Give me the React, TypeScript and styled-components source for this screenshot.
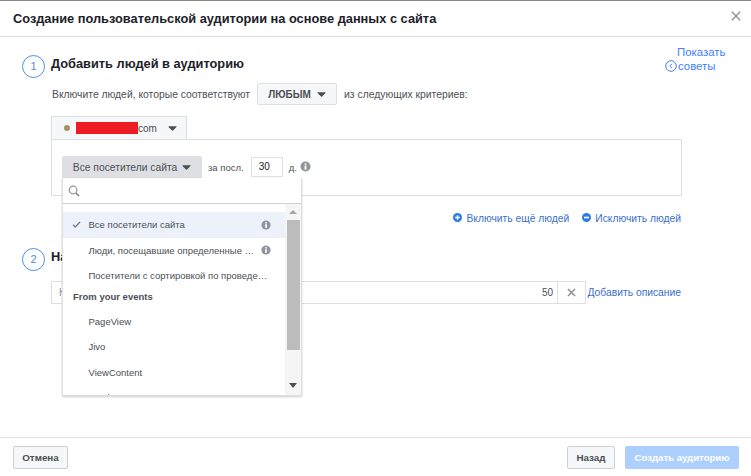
import styled, { createGlobalStyle } from 'styled-components';

const GlobalStyle = createGlobalStyle`
  html, body {
    margin: 0;
    padding: 0;
    background: #fff;
    font-family: 'Liberation Sans', Arial, sans-serif;
  }
`;

const Caret = ({ color = '#4b4f56' }: { color?: string }) => (
  <CaretIcon viewBox="0 0 10 6" fill={color}>
    <path d="M0.6 0.4h8.8a.5.5 0 0 1 .4.8L5.6 5.4a.8.8 0 0 1-1.2 0L.2 1.2a.5.5 0 0 1 .4-.8z" />
  </CaretIcon>
);

const InfoIcon = () => (
  <InfoSvg viewBox="0 0 12 12">
    <circle cx="6" cy="6" r="5.5" fill="#90949c" />
    <rect x="5" y="5" width="2" height="4.4" fill="#fff" />
    <rect x="5" y="2.6" width="2" height="1.6" fill="#fff" />
  </InfoSvg>
);

const rows = [
  { label: 'Все посетители сайта', selected: true, info: true },
  { label: 'Люди, посещавшие определенные …', info: true },
  { label: 'Посетители с сортировкой по проведе…' },
];

const events = ['PageView', 'Jivo', 'ViewContent', 'Lead'];

export default function App() {
  return (
    <Modal>
      <GlobalStyle />
      <Header>
        <Title>Создание пользовательской аудитории на основе данных с сайта</Title>
        <CloseIcon viewBox="0 0 12 12">
          <path d="M1 1l10 10M11 1L1 11" stroke="#90949c" strokeWidth="1.8" fill="none" />
        </CloseIcon>
      </Header>

      <Body>
        <StepHead>
          <StepCircle>1</StepCircle>
          <StepTitle>Добавить людей в аудиторию</StepTitle>
          <Tips>
            <TipsLine>Показать</TipsLine>
            <TipsIconLine>
              <svg width="12" height="12" viewBox="0 0 12 12" fill="none">
                <circle cx="6" cy="6" r="5.3" stroke="#4080ff" />
                <path d="M7 3.8L4.8 6 7 8.2" stroke="#4080ff" />
              </svg>
              советы
            </TipsIconLine>
          </Tips>
        </StepHead>

        <Criteria>
          <span>Включите людей, которые соответствуют</span>
          <MatchButton>
            ЛЮБЫМ <Caret />
          </MatchButton>
          <span>из следующих критериев:</span>
        </Criteria>

        <PixelTab>
          <PixelDot />
          <Redacted />
          <span>com</span>
          <PixelCaret>
            <Caret />
          </PixelCaret>
        </PixelTab>

        <RuleBox>
          <RuleRow>
            <RuleSelect>
              Все посетители сайта <Caret />
            </RuleSelect>
            <RuleText>за посл.</RuleText>
            <DaysInput>30</DaysInput>
            <RuleText>д.</RuleText>
            <InfoIcon />
          </RuleRow>

          <Dropdown>
            <SearchBar>
              <svg width="12" height="12" viewBox="0 0 12 12" fill="none">
                <circle cx="5" cy="5" r="3.8" stroke="#90949c" strokeWidth="1.2" />
                <path d="M8 8l3 3" stroke="#7a7d84" strokeWidth="1.6" />
              </svg>
            </SearchBar>
            <ListArea>
              <List>
                {rows.map((row) => (
                  <Option key={row.label} $selected={row.selected}>
                    {row.selected && (
                      <CheckIcon viewBox="0 0 10 8">
                        <path d="M1 4.2l2.6 2.6L9 1.2" stroke="#7a7d84" strokeWidth="1.6" fill="none" />
                      </CheckIcon>
                    )}
                    <OptionLabel>{row.label}</OptionLabel>
                    {row.info && (
                      <OptionInfo>
                        <InfoIcon />
                      </OptionInfo>
                    )}
                  </Option>
                ))}
                <GroupLabel>From your events</GroupLabel>
                {events.map((name) => (
                  <Option key={name}>
                    <OptionLabel>{name}</OptionLabel>
                  </Option>
                ))}
              </List>
              <Scrollbar>
                <ArrowUp />
                <Thumb />
                <ArrowDown />
              </Scrollbar>
            </ListArea>
          </Dropdown>
        </RuleBox>

        <AddLinks>
          <AddLink>
            <LinkIcon viewBox="0 0 10 10">
              <circle cx="5" cy="5" r="5" fill="#2d7be5" />
              <path d="M5 2.4v5.2M2.4 5h5.2" stroke="#fff" strokeWidth="1.5" />
            </LinkIcon>
            Включить ещё людей
          </AddLink>
          <AddLink>
            <LinkIcon viewBox="0 0 10 10">
              <circle cx="5" cy="5" r="5" fill="#2d7be5" />
              <path d="M2.2 5h5.6" stroke="#fff" strokeWidth="1.8" />
            </LinkIcon>
            Исключить людей
          </AddLink>
        </AddLinks>

        <SecondStepHead>
          <StepCircle>2</StepCircle>
          <StepTitle>Назовите аудиторию</StepTitle>
        </SecondStepHead>

        <NameRow>
          <NameField>
            <Placeholder>Название аудитории</Placeholder>
            <Counter>50</Counter>
            <ClearCell>
              <svg width="9" height="9" viewBox="0 0 9 9">
                <path d="M1 1l7 7M8 1L1 8" stroke="#90949c" strokeWidth="1.6" fill="none" />
              </svg>
            </ClearCell>
          </NameField>
          <DescLink>Добавить описание</DescLink>
        </NameRow>
      </Body>

      <Footer>
        <FootButton $width={55}>Отмена</FootButton>
        <FootRight>
          <FootButton $width={48}>Назад</FootButton>
          <PrimaryButton>Создать аудиторию</PrimaryButton>
        </FootRight>
      </Footer>
    </Modal>
  );
}

const Modal = styled.div`
  width: 751px;
  height: 476px;
  box-sizing: border-box;
  border-top: 1px solid #8a8a8a;
  display: flex;
  flex-direction: column;
  overflow: hidden;
  background: #fff;
`;

const Header = styled.div`
  height: 34px;
  flex: none;
  padding: 0 10px 1px 13px;
  box-sizing: content-box;
  display: flex;
  align-items: center;
  justify-content: space-between;
  border-bottom: 1px solid #dddfe2;
`;

const Title = styled.div`
  font-size: 12.8px;
  font-weight: 700;
  color: #1d2129;
`;

const CloseIcon = styled.svg`
  width: 10px;
  height: 10px;
  margin-top: -4px;
`;

const Body = styled.div`
  flex: 1;
  padding: 16px 0 0 22px;
`;

const StepHead = styled.div`
  width: 705px;
  height: 26px;
  display: flex;
  align-items: center;
  gap: 6px;
`;

const SecondStepHead = styled(StepHead)`
  margin-top: 22px;
`;

const StepCircle = styled.div`
  width: 23px;
  height: 23px;
  flex: none;
  box-sizing: border-box;
  border: 1px solid #4a90e2;
  border-radius: 50%;
  display: flex;
  align-items: center;
  justify-content: center;
  font-size: 11px;
  color: #4a90e2;
`;

const StepTitle = styled.div`
  flex: 1;
  font-size: 12.8px;
  font-weight: 700;
  color: #1d2129;
  margin-top: -5px;
`;

const Tips = styled.div`
  width: 62px;
  align-self: flex-start;
  margin-top: -8px;
  font-size: 11.4px;
  line-height: 14px;
  color: #4080ff;
`;

const TipsLine = styled.div`
  padding-left: 12px;
`;

const TipsIconLine = styled.div`
  display: flex;
  align-items: center;
  gap: 1px;
`;

const Criteria = styled.div`
  margin: 4px 0 0 30px;
  height: 22px;
  display: flex;
  align-items: center;
  font-size: 10.35px;
  color: #4b4f56;
  gap: 7px;
`;

const MatchButton = styled.div`
  width: 80px;
  height: 22px;
  box-sizing: border-box;
  display: flex;
  align-items: center;
  justify-content: center;
  gap: 6px;
  background: #f6f7f9;
  border: 1px solid #dddfe2;
  border-radius: 2px;
  font-size: 10px;
  font-weight: 700;
  color: #4b4f56;
`;

const CaretIcon = styled.svg`
  width: 9px;
  height: 5px;
  flex: none;
`;

const PixelTab = styled.div`
  margin: 11px 0 0 29px;
  width: 136px;
  height: 23px;
  box-sizing: border-box;
  display: flex;
  align-items: center;
  padding-left: 12px;
  background: #f6f7f9;
  border: 1px solid #dddfe2;
  border-bottom: none;
  font-size: 10px;
  color: #4b4f56;
`;

const PixelDot = styled.span`
  width: 6px;
  height: 6px;
  border-radius: 50%;
  background: #a3916b;
  margin-right: 3px;
`;

const Redacted = styled.span`
  width: 62px;
  height: 12px;
  margin-left: 3px;
  background: #ed1c24;
`;

const PixelCaret = styled.span`
  display: flex;
  margin-left: 11px;
`;

const RuleBox = styled.div`
  position: relative;
  margin-left: 29px;
  width: 631px;
  height: 57px;
  box-sizing: border-box;
  border: 1px solid #dddfe2;
  padding: 16px 0 0 10px;
`;

const RuleRow = styled.div`
  display: flex;
  align-items: center;
  height: 22px;
`;

const RuleSelect = styled.div`
  width: 140px;
  height: 22px;
  display: flex;
  align-items: center;
  justify-content: center;
  gap: 5px;
  background: #dddfe2;
  border-radius: 2px 2px 0 0;
  font-size: 10.3px;
  color: #4b4f56;
`;

const RuleText = styled.span`
  font-size: 9.5px;
  color: #4b4f56;
  margin-left: 6px;
`;

const DaysInput = styled.div`
  width: 32px;
  height: 20px;
  margin-left: 7px;
  box-sizing: border-box;
  border: 1px solid #dddfe2;
  padding-left: 7px;
  line-height: 18px;
  font-size: 10px;
  color: #1d2129;
`;

const InfoSvg = styled.svg`
  width: 11px;
  height: 11px;
  margin-left: 3px;
  margin-top: -2px;
`;

const Dropdown = styled.div`
  position: absolute;
  left: 10px;
  top: 38px;
  width: 240px;
  height: 218px;
  box-sizing: border-box;
  background: #fff;
  border: 1px solid #dddfe2;
  border-top: none;
  box-shadow: 0 1px 2px rgba(0, 0, 0, 0.2);
  z-index: 2;
  display: flex;
  flex-direction: column;
`;

const SearchBar = styled.div`
  height: 25px;
  flex: none;
  display: flex;
  align-items: center;
  padding-left: 5px;
  border-bottom: 1px solid #ced0d4;
`;

const ListArea = styled.div`
  flex: 1;
  min-height: 0;
  display: flex;
  overflow: hidden;
`;

const List = styled.div`
  flex: 1;
  padding-top: 8px;
  overflow: hidden;
`;

const Option = styled.div<{ $selected?: boolean }>`
  position: relative;
  height: 25.5px;
  display: flex;
  align-items: center;
  padding: 0 14px 0 25.5px;
  background: ${(p) => (p.$selected ? '#edf2fa' : 'transparent')};
`;

const OptionLabel = styled.span`
  flex: 1;
  font-size: 9.5px;
  color: #4b4f56;
  white-space: nowrap;
`;

const OptionInfo = styled.span`
  display: flex;
  margin-left: -3px;

  svg {
    margin: 0;
    width: 10px;
    height: 10px;
  }
`;

const CheckIcon = styled.svg`
  position: absolute;
  left: 9px;
  top: 9px;
  width: 9px;
  height: 7px;
`;

const GroupLabel = styled.div`
  height: 20px;
  line-height: 16px;
  padding-left: 10px;
  font-size: 9.5px;
  font-weight: 700;
  color: #4b4f56;
`;

const Scrollbar = styled.div`
  width: 16px;
  flex: none;
  display: flex;
  flex-direction: column;
  align-items: center;
  background: #f5f5f5;
`;

const ArrowUp = styled.div`
  margin: 6px 0 6px;
  border-left: 4px solid transparent;
  border-right: 4px solid transparent;
  border-bottom: 4px solid #a8a8a8;
`;

const Thumb = styled.div`
  width: 13px;
  height: 130px;
  background: #bcbcbc;
`;

const ArrowDown = styled.div`
  margin-top: auto;
  margin-bottom: 7px;
  border-left: 4px solid transparent;
  border-right: 4px solid transparent;
  border-top: 5px solid #505050;
`;

const AddLinks = styled.div`
  width: 659px;
  height: 12px;
  margin-top: 16px;
  display: flex;
  justify-content: flex-end;
  gap: 13px;
`;

const AddLink = styled.div`
  display: flex;
  align-items: center;
  gap: 4px;
  font-size: 10.3px;
  color: #3a6fc9;
`;

const LinkIcon = styled.svg`
  width: 9px;
  height: 9px;
  margin-top: -2px;
`;

const NameRow = styled.div`
  margin: 9px 0 0 29px;
  width: 630px;
  display: flex;
  align-items: center;
  justify-content: space-between;
`;

const NameField = styled.div`
  width: 535px;
  height: 23px;
  box-sizing: border-box;
  display: flex;
  align-items: center;
  border: 1px solid #dddfe2;
  font-size: 10px;
`;

const Placeholder = styled.span`
  flex: 1;
  padding-left: 7px;
  color: #90949c;
`;

const Counter = styled.span`
  margin-right: 4px;
  color: #4b4f56;
`;

const ClearCell = styled.span`
  width: 27px;
  height: 100%;
  display: flex;
  align-items: center;
  justify-content: center;
  border-left: 1px solid #dddfe2;
`;

const DescLink = styled.span`
  font-size: 10.3px;
  color: #3a6fc9;
`;

const Footer = styled.div`
  height: 38px;
  flex: none;
  padding: 0 12px 0 13px;
  display: flex;
  align-items: center;
  justify-content: space-between;
  border-top: 1px solid #dddfe2;
`;

const FootRight = styled.div`
  display: flex;
  gap: 10px;
`;

const FootButton = styled.div<{ $width: number }>`
  width: ${(p) => p.$width}px;
  height: 23px;
  box-sizing: border-box;
  display: flex;
  align-items: center;
  justify-content: center;
  background: #f6f7f9;
  border: 1px solid #ced0d4;
  border-radius: 2px;
  font-size: 9.8px;
  font-weight: 700;
  color: #4b4f56;
`;

const PrimaryButton = styled.div`
  width: 114px;
  height: 23px;
  display: flex;
  align-items: center;
  justify-content: center;
  background: #adcffe;
  border-radius: 2px;
  font-size: 9.6px;
  font-weight: 700;
  color: #fff;
  white-space: nowrap;
  overflow: hidden;
`;
